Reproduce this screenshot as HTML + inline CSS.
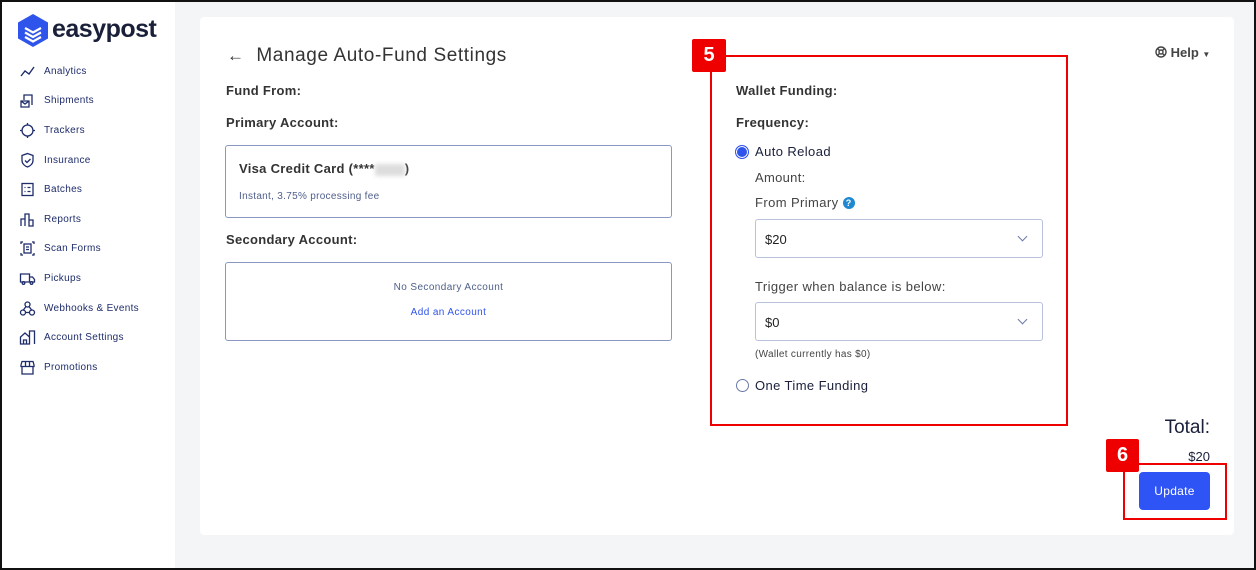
<!DOCTYPE html>
<html><head><style>
*{margin:0;padding:0;box-sizing:border-box}
body{width:1256px;height:570px;overflow:hidden;background:#f3f5f7;font-family:"Liberation Sans",sans-serif;position:relative;color:#333}
.frame{position:absolute;left:0;top:0;width:1256px;height:570px;border:2px solid #111;z-index:10;pointer-events:none}
.side{position:absolute;left:0;top:0;width:175px;height:570px;background:#fff}
.card{position:absolute;left:200px;top:17px;width:1034px;height:518px;background:#fff;border-radius:4px}
.a{position:absolute;white-space:nowrap}
.nav{position:absolute;left:19px;font-size:10px;color:#1f2d6b;display:flex;align-items:center;letter-spacing:0.3px}
.nav svg{width:17px;height:17px;margin-right:8px}
.b{font-weight:bold;font-size:13px;color:#333;letter-spacing:0.3px}
.box{position:absolute;border:1px solid #8a97c3;border-radius:3px}
.sel{position:absolute;left:755px;width:288px;height:39px;border:1px solid #b8c2dc;border-radius:3px;font-size:13px;color:#222;padding:12px 9px}
.sel:after{content:"";position:absolute;right:16px;top:13px;width:6px;height:6px;border-right:1.3px solid #6b7aa8;border-bottom:1.3px solid #6b7aa8;transform:rotate(45deg)}
.red{position:absolute;border:2.5px solid #e00;}
.lab{position:absolute;background:#e00;color:#fff;font-weight:bold;font-size:20px;text-align:center;border-radius:2px}
</style></head><body>
<div class="side">
<svg style="position:absolute;left:18px;top:14px" width="30" height="33" viewBox="0 0 30 33"><path d="M15 0L30 8.5V24.5L15 33L0 24.5V8.5Z" fill="#2f54eb"/><path d="M7 14l8 4.5 8-4.5M7 18.5l8 4.5 8-4.5M7 23l8 4.5 8-4.5" stroke="#fff" stroke-width="2.2" fill="none"/></svg>
<div class="a" style="left:52px;top:15px;font-size:25px;font-weight:bold;color:#1a1f3a;letter-spacing:-0.5px">easypost</div>
<div class="nav" style="top:63px"><svg viewBox="0 0 17 17" fill="none" stroke="#1f2d6b" stroke-width="1.4"><path d="M2 13l4-5 4 3 5-7"/></svg>Analytics</div>
<div class="nav" style="top:92px"><svg viewBox="0 0 17 17" fill="none" stroke="#1f2d6b" stroke-width="1.3"><path d="M5 8V3h8v10M2 9h8v6H2zM2 9l4 3 4-3"/></svg>Shipments</div>
<div class="nav" style="top:122px"><svg viewBox="0 0 17 17" fill="none" stroke="#1f2d6b" stroke-width="1.3"><circle cx="8.5" cy="8.5" r="5.5"/><path d="M8.5 1v2M8.5 14v2M1 8.5h2M14 8.5h2"/></svg>Trackers</div>
<div class="nav" style="top:152px"><svg viewBox="0 0 17 17" fill="none" stroke="#1f2d6b" stroke-width="1.3"><path d="M8.5 1.5l5.5 2v5c0 3-2.5 5.5-5.5 6.5C5.5 14 3 11.5 3 8.5v-5z M6 8.5l2 2 3.5-3.5"/></svg>Insurance</div>
<div class="nav" style="top:181px"><svg viewBox="0 0 17 17" fill="none" stroke="#1f2d6b" stroke-width="1.3"><rect x="3" y="2.5" width="11" height="12"/><path d="M5.5 6.5h1M8.5 6.5h3M5.5 10.5h1M8.5 10.5h3"/></svg>Batches</div>
<div class="nav" style="top:211px"><svg viewBox="0 0 17 17" fill="none" stroke="#1f2d6b" stroke-width="1.3"><path d="M2 15V8h4v7M6 15V3h4v12M10 15V9h4v6z"/></svg>Reports</div>
<div class="nav" style="top:240px"><svg viewBox="0 0 17 17" fill="none" stroke="#1f2d6b" stroke-width="1.3"><path d="M2 4V2h2M13 2h2v2M15 13v2h-2M4 15H2v-2"/><rect x="5" y="4" width="7" height="9"/><path d="M7 7h3M7 9.5h3"/></svg>Scan Forms</div>
<div class="nav" style="top:270px"><svg viewBox="0 0 17 17" fill="none" stroke="#1f2d6b" stroke-width="1.3"><path d="M1.5 4h9v8h-9zM10.5 7h3l2 2.5V12h-5"/><circle cx="4.5" cy="13" r="1.3"/><circle cx="12.5" cy="13" r="1.3"/></svg>Pickups</div>
<div class="nav" style="top:300px"><svg viewBox="0 0 17 17" fill="none" stroke="#1f2d6b" stroke-width="1.3"><circle cx="8.5" cy="4.5" r="2.5"/><circle cx="4" cy="12.5" r="2.5"/><circle cx="13" cy="12.5" r="2.5"/><path d="M7 6.5l-3 4M10 6.5l3 4M6.5 12.5h4"/></svg>Webhooks &amp; Events</div>
<div class="nav" style="top:329px"><svg viewBox="0 0 17 17" fill="none" stroke="#1f2d6b" stroke-width="1.3"><path d="M1.5 15V8l4.5-4 4.5 4v7zM10.5 15V2h5v13M4.5 15v-4h3v4"/></svg>Account Settings</div>
<div class="nav" style="top:359px"><svg viewBox="0 0 17 17" fill="none" stroke="#1f2d6b" stroke-width="1.3"><path d="M2 6l1-3.5h11L15 6v1.5H2zM3 7.5V15h11V7.5M6.5 2.5v5M10.5 2.5v5"/></svg>Promotions</div>
</div>
<div class="card"></div>
<div class="a" style="left:227px;top:45px;font-size:19px;color:#333;letter-spacing:0.6px"><span style="font-size:17px">←</span>&nbsp; Manage Auto-Fund Settings</div>
<div class="a b" style="left:226px;top:83px">Fund From:</div>
<div class="a b" style="left:226px;top:115px">Primary Account:</div>
<div class="box" style="left:225px;top:145px;width:447px;height:73px"></div>
<div class="a b" style="left:239px;top:161px">Visa Credit Card (****<span style="display:inline-block;width:30px;height:12px;background:#ddd;filter:blur(2px);vertical-align:middle"></span>)</div>
<div class="a" style="left:239px;top:191px;font-size:10px;color:#4f5f8a;letter-spacing:0.3px">Instant, 3.75% processing fee</div>
<div class="a b" style="left:226px;top:232px">Secondary Account:</div>
<div class="box" style="left:225px;top:262px;width:447px;height:79px"></div>
<div class="a" style="left:225px;width:447px;text-align:center;top:282px;font-size:10px;color:#4f5f8a;letter-spacing:0.4px">No Secondary Account</div>
<div class="a" style="left:225px;width:447px;text-align:center;top:307px;font-size:10px;color:#2f54eb;letter-spacing:0.4px">Add an Account</div>
<div class="a" style="left:1155px;top:45px;font-size:13px;font-weight:bold;color:#444"><svg width="12" height="12" viewBox="0 0 12 12" style="vertical-align:-1px" fill="none" stroke="#444" stroke-width="1.4"><circle cx="6" cy="6" r="5"/><circle cx="6" cy="6" r="2"/><path d="M2.5 2.5l2 2M9.5 2.5l-2 2M2.5 9.5l2-2M9.5 9.5l-2-2"/></svg> Help <span style="font-size:8px">▼</span></div>
<div class="a b" style="left:736px;top:83px">Wallet Funding:</div>
<div class="a b" style="left:736px;top:115px">Frequency:</div>
<div class="a" style="left:735px;top:145px;width:14px;height:14px;border-radius:50%;background:#2f54eb;border:1px solid #2f54eb;box-shadow:inset 0 0 0 1px #fff"></div>
<div class="a" style="left:755px;top:144px;font-size:13px;color:#1a1f3a;letter-spacing:0.4px">Auto Reload</div>
<div class="a" style="left:755px;top:170px;font-size:13px;color:#444;letter-spacing:0.3px">Amount:</div>
<div class="a" style="left:755px;top:195px;font-size:13px;color:#444;letter-spacing:0.4px">From Primary <span style="display:inline-block;width:12px;height:12px;border-radius:50%;background:#1e88d0;color:#fff;font-size:9px;text-align:center;line-height:12px;font-weight:bold;vertical-align:1px;letter-spacing:0">?</span></div>
<div class="sel" style="top:219px">$20</div>
<div class="a" style="left:755px;top:279px;font-size:13px;color:#444;letter-spacing:0.4px">Trigger when balance is below:</div>
<div class="sel" style="top:302px">$0</div>
<div class="a" style="left:755px;top:349px;font-size:10px;color:#444;letter-spacing:0.3px">(Wallet currently has $0)</div>
<div class="a" style="left:736px;top:379px;width:13px;height:13px;border-radius:50%;border:1px solid #6b7aa8"></div>
<div class="a" style="left:755px;top:378px;font-size:13px;color:#1a1f3a;letter-spacing:0.4px">One Time Funding</div>
<div class="a" style="left:1150px;width:60px;text-align:right;top:417px;font-size:19px;color:#1a1f3a">Total:</div>
<div class="a" style="left:1170px;width:40px;text-align:right;top:449px;font-size:13px;color:#1a1f3a">$20</div>
<div class="a" style="left:1139px;top:472px;width:71px;height:38px;background:#2f54f5;border-radius:4px;color:#fff;font-size:12px;text-align:center;line-height:38px;letter-spacing:0.3px">Update</div>
<div class="red" style="left:710px;top:55px;width:358px;height:371px"></div>
<div class="lab" style="left:692px;top:39px;width:34px;height:33px;line-height:33px">5</div>
<div class="red" style="left:1123px;top:463px;width:104px;height:57px"></div>
<div class="lab" style="left:1106px;top:439px;width:33px;height:33px;line-height:33px">6</div>
<div class="frame"></div>
</body></html>
